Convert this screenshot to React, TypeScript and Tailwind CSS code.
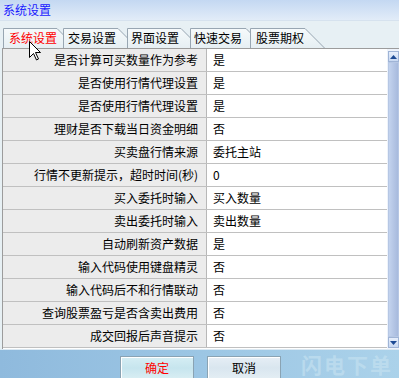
import React from "react";

const rows: [string, string][] = [
  ["是否计算可买数量作为参考", "是"],
  ["是否使用行情代理设置", "是"],
  ["是否使用行情代理设置", "是"],
  ["理财是否下载当日资金明细", "否"],
  ["买卖盘行情来源", "委托主站"],
  ["行情不更新提示，超时时间(秒)", "0"],
  ["买入委托时输入", "买入数量"],
  ["卖出委托时输入", "卖出数量"],
  ["自动刷新资产数据", "是"],
  ["输入代码使用键盘精灵", "否"],
  ["输入代码后不和行情联动", "否"],
  ["查询股票盈亏是否含卖出费用", "否"],
  ["成交回报后声音提示", "否"],
];

const tabs = [
  { label: "系统设置", w: "w-[60px]", pl: "pl-[6px]", corner: 54, active: true },
  { label: "交易设置", w: "w-[64px]", pl: "pl-[5px]", corner: 55, active: false },
  { label: "界面设置", w: "w-[63px]", pl: "pl-[4px]", corner: 54, active: false },
  { label: "快速交易", w: "w-[60px]", pl: "pl-[4px]", corner: 56, active: false },
  { label: "股票期权", w: "w-[72px]", pl: "pl-[6px]", corner: 55, active: false },
];

function Tab({ label, w, pl, corner, active }: { label: string; w: string; pl: string; corner: number; active: boolean }) {
  return (
    <div className={`relative h-[20px] shrink-0 ${w}`}>
      <svg className="absolute left-0 top-0 overflow-visible" width={corner + 20} height={20}>
        <defs>
          <linearGradient id="tabg" x1="0" y1="0" x2="0" y2="1">
            <stop offset="0" stopColor="#f6fafb" />
            <stop offset="1" stopColor="#e6eff3" />
          </linearGradient>
        </defs>
        <path d={`M0.5 20 V0.5 H${corner} L${corner + 19.5} 20`} fill="url(#tabg)" stroke="#98a6b2" strokeWidth="1" />
      </svg>
      <span className={`relative block ${pl} pt-[2px] text-[12px] leading-[16px] ${active ? "text-[#ff0000]" : "text-black"}`}>{label}</span>
    </div>
  );
}

function Cursor() {
  return (
    <svg className="absolute left-[29px] top-[41px]" width="13" height="20" viewBox="0 0 13 20">
      <path d="M0.5 0.5 V16.5 L4.5 12.5 L7.5 19 L9.5 18 L6.5 11.5 H11.5 Z" fill="#ffffff" stroke="#000000" strokeWidth="1" strokeLinejoin="miter" />
    </svg>
  );
}

export default function App() {
  return (
    <div
      className="relative w-[399px] h-[378px] overflow-hidden flex flex-col bg-[#e7f0f4]"
      style={{ fontFamily: '"Noto Sans CJK SC", "Noto Sans", sans-serif' }}
    >
      {/* title bar */}
      <div className="h-[21px] shrink-0 bg-gradient-to-b from-[#c4d8f2] to-[#e2ecf8] border-b border-[#d6e2ee] pl-[3px] text-[12px] leading-[20px] text-[#1a1aff]">
        系统设置
      </div>
      {/* tabs */}
      <div className="h-[27px] shrink-0 flex items-end pl-[3px]">
        {tabs.map((t) => (
          <Tab key={t.label} {...t} />
        ))}
      </div>
      {/* grid + scrollbar */}
      <div className="h-[301px] shrink-0 flex">
        <div className="w-[2px] shrink-0" />
        <div className="w-[385px] shrink-0 border-l border-t border-[#9c9c9c] bg-white">
          {rows.map(([k, v], i) => (
            <div key={i} className="flex h-[23px] border-b border-[#c0c0c0] text-[12px] text-black">
              <div className="w-[203px] shrink-0 bg-[#ececec] flex items-center justify-end pr-[8px] whitespace-nowrap">{k}</div>
              <div className="w-[1px] shrink-0 bg-[#b8b8b8]" />
              <div className="flex-1 flex items-center pl-[6px] whitespace-nowrap">{v}</div>
            </div>
          ))}
        </div>
        <div className="w-[12px] shrink-0 flex flex-col bg-[#eef3fb] border-t border-[#9c9c9c] pt-[2px] pb-[1px]">
          <div className="h-[11px] w-[11px] ml-[1px] shrink-0 bg-gradient-to-b from-[#e6eefb] to-[#c9d9f2] border border-[#9fb4d6] flex items-center justify-center">
            <svg width="7" height="4" viewBox="0 0 7 4"><path d="M3.5 0 L7 4 H0 Z" fill="#1c4a94" /></svg>
          </div>
          <div className="flex-1 ml-[1px] w-[11px] bg-gradient-to-r from-[#c3d3ee] to-[#a7badd] border border-[#b6c7e4]" />
          <div className="h-[11px] w-[11px] ml-[1px] shrink-0 bg-gradient-to-b from-[#e6eefb] to-[#c9d9f2] border border-[#9fb4d6] flex items-center justify-center">
            <svg width="7" height="4" viewBox="0 0 7 4"><path d="M0 0 H7 L3.5 4 Z" fill="#1c4a94" /></svg>
          </div>
        </div>
      </div>
      {/* bottom */}
      <div className="relative flex-1 bg-gradient-to-r from-[#8fbadd] via-[#9cc6e4] to-[#abd2ea] border-t border-[#dbe9f3] flex justify-center gap-[13px] pt-[6px] pl-[2px]">
        <span className="absolute right-[6px] top-[2px] text-[21px] leading-[24px] font-bold tracking-[2px] text-[#c3e0f0] opacity-70 whitespace-nowrap">闪电下单</span>
        <button className="relative w-[74px] h-[24px] border border-[#8aa3b3] bg-gradient-to-b from-[#d6eef4] via-[#c6e5ee] to-[#d9eef3] text-[12px] text-[#ff0000] leading-[20px] shadow-[inset_1px_1px_0_#ffffff]">
          确定
        </button>
        <button className="relative w-[74px] h-[24px] border border-[#8aa3b3] bg-gradient-to-b from-[#e6eef5] via-[#d9e6ef] to-[#e4eef4] text-[12px] text-black leading-[20px] shadow-[inset_1px_1px_0_#ffffff]">
          取消
        </button>
      </div>
      <Cursor />
    </div>
  );
}
